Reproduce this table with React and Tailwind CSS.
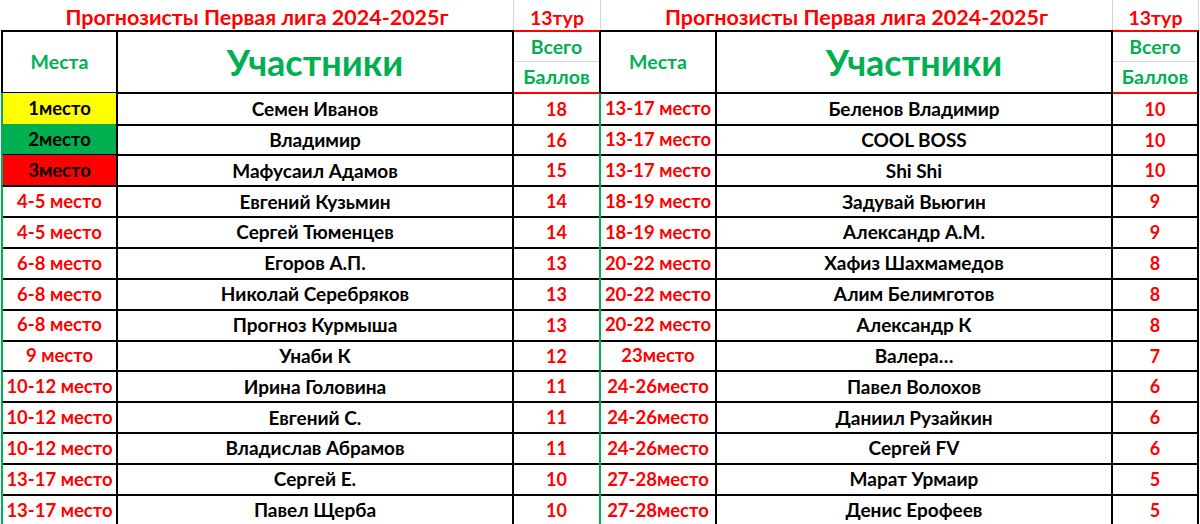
const left = [
  { place: "1место", name: "Семен Иванов", score: 18, bg: "bg-[#ffff00]" },
  { place: "2место", name: "Владимир", score: 16, bg: "bg-[#00b050]" },
  { place: "3место", name: "Мафусаил Адамов", score: 15, bg: "bg-[#ff0000]" },
  { place: "4-5 место", name: "Евгений Кузьмин", score: 14 },
  { place: "4-5 место", name: "Сергей Тюменцев", score: 14 },
  { place: "6-8 место", name: "Егоров А.П.", score: 13 },
  { place: "6-8 место", name: "Николай Серебряков", score: 13 },
  { place: "6-8 место", name: "Прогноз Курмыша", score: 13 },
  { place: "9 место", name: "Унаби К", score: 12 },
  { place: "10-12 место", name: "Ирина Головина", score: 11 },
  { place: "10-12 место", name: "Евгений С.", score: 11 },
  { place: "10-12 место", name: "Владислав Абрамов", score: 11 },
  { place: "13-17 место", name: "Сергей Е.", score: 10 },
  { place: "13-17 место", name: "Павел Щерба", score: 10 },
];

const right = [
  { place: "13-17 место", name: "Беленов Владимир", score: 10 },
  { place: "13-17 место", name: "COOL BOSS", score: 10 },
  { place: "13-17 место", name: "Shi Shi", score: 10 },
  { place: "18-19 место", name: "Задувай Вьюгин", score: 9 },
  { place: "18-19 место", name: "Александр А.М.", score: 9 },
  { place: "20-22 место", name: "Хафиз Шахмамедов", score: 8 },
  { place: "20-22 место", name: "Алим Белимготов", score: 8 },
  { place: "20-22 место", name: "Александр К", score: 8 },
  { place: "23место", name: "Валера…", score: 7 },
  { place: "24-26место", name: "Павел Волохов", score: 6 },
  { place: "24-26место", name: "Даниил Рузайкин", score: 6 },
  { place: "24-26место", name: "Сергей FV", score: 6 },
  { place: "27-28место", name: "Марат Урмаир", score: 5 },
  { place: "27-28место", name: "Денис Ерофеев", score: 5 },
];

const Board = ({ rows, first }) => {
  const cols = first
    ? "grid-cols-[117px_396px_87px]"
    : "grid-cols-[116px_396px_86px]";
  return (
    <div className={first ? "w-[600px]" : "w-[598px]"}>
      {/* title row */}
      <div className={`grid ${cols} h-[30px]`}>
        <div className="col-span-2 flex items-center justify-center whitespace-nowrap border-r border-[#d4d4d4] pt-px text-[21.5px] font-bold text-[#ff0000]">
          Прогнозисты Первая лига 2024-2025г
        </div>
        <div className="flex items-center justify-center border-r border-[#d4d4d4] pt-px text-[19.5px] font-bold text-[#ff0000]">
          13тур
        </div>
      </div>
      {/* header */}
      <div className={`grid ${cols} h-[63px]`}>
        <div
          className={`flex items-center justify-center border-y-2 border-r-2 border-black text-[19.5px] font-bold text-[#00b050] ${
            first ? "border-l-2" : ""
          }`}
        >
          Места
        </div>
        <div className="flex items-center justify-center border-y-2 border-r-2 border-black text-[36px] font-bold text-[#00b050]">
          Участники
        </div>
        <div className="flex flex-col border-y-2 border-y-[#ff0000] border-r-2 border-r-black text-[19.5px] font-bold text-[#00b050]">
          <div className="flex flex-1 items-center justify-center border-b border-[#d9d9d9]">Всего</div>
          <div className="flex flex-1 items-center justify-center">Баллов</div>
        </div>
      </div>
      {/* data */}
      {rows.map((r, i) => (
        <div key={i} className={`grid ${cols} h-[30.86px] font-bold`}>
          <div
            className={`flex items-center justify-center whitespace-nowrap border-b-2 border-r-2 border-b-black border-r-black pt-[2px] text-[18.5px] ${
              first ? "border-l-2 border-l-[#00b050]" : ""
            } ${r.bg ? `${r.bg} text-black` : "text-[#ff0000]"}`}
          >
            {r.place}
          </div>
          <div className="flex items-center justify-center whitespace-nowrap border-b-2 border-r-2 border-black pt-[2px] text-[19px] text-black">
            {r.name}
          </div>
          <div
            className={`flex items-center justify-center border-b-2 border-r-2 border-b-black pt-[2px] text-[18px] text-[#ff0000] ${
              first ? "border-r-[#00b050]" : "border-r-black"
            }`}
          >
            {r.score}
          </div>
        </div>
      ))}
    </div>
  );
};

export default function App() {
  return (
    <div
      className="flex h-[524px] w-[1200px] overflow-hidden bg-white pl-px"
      style={{ fontFamily: "Lato, 'Open Sans', sans-serif" }}
    >
      <Board rows={left} first />
      <Board rows={right} />
    </div>
  );
}
